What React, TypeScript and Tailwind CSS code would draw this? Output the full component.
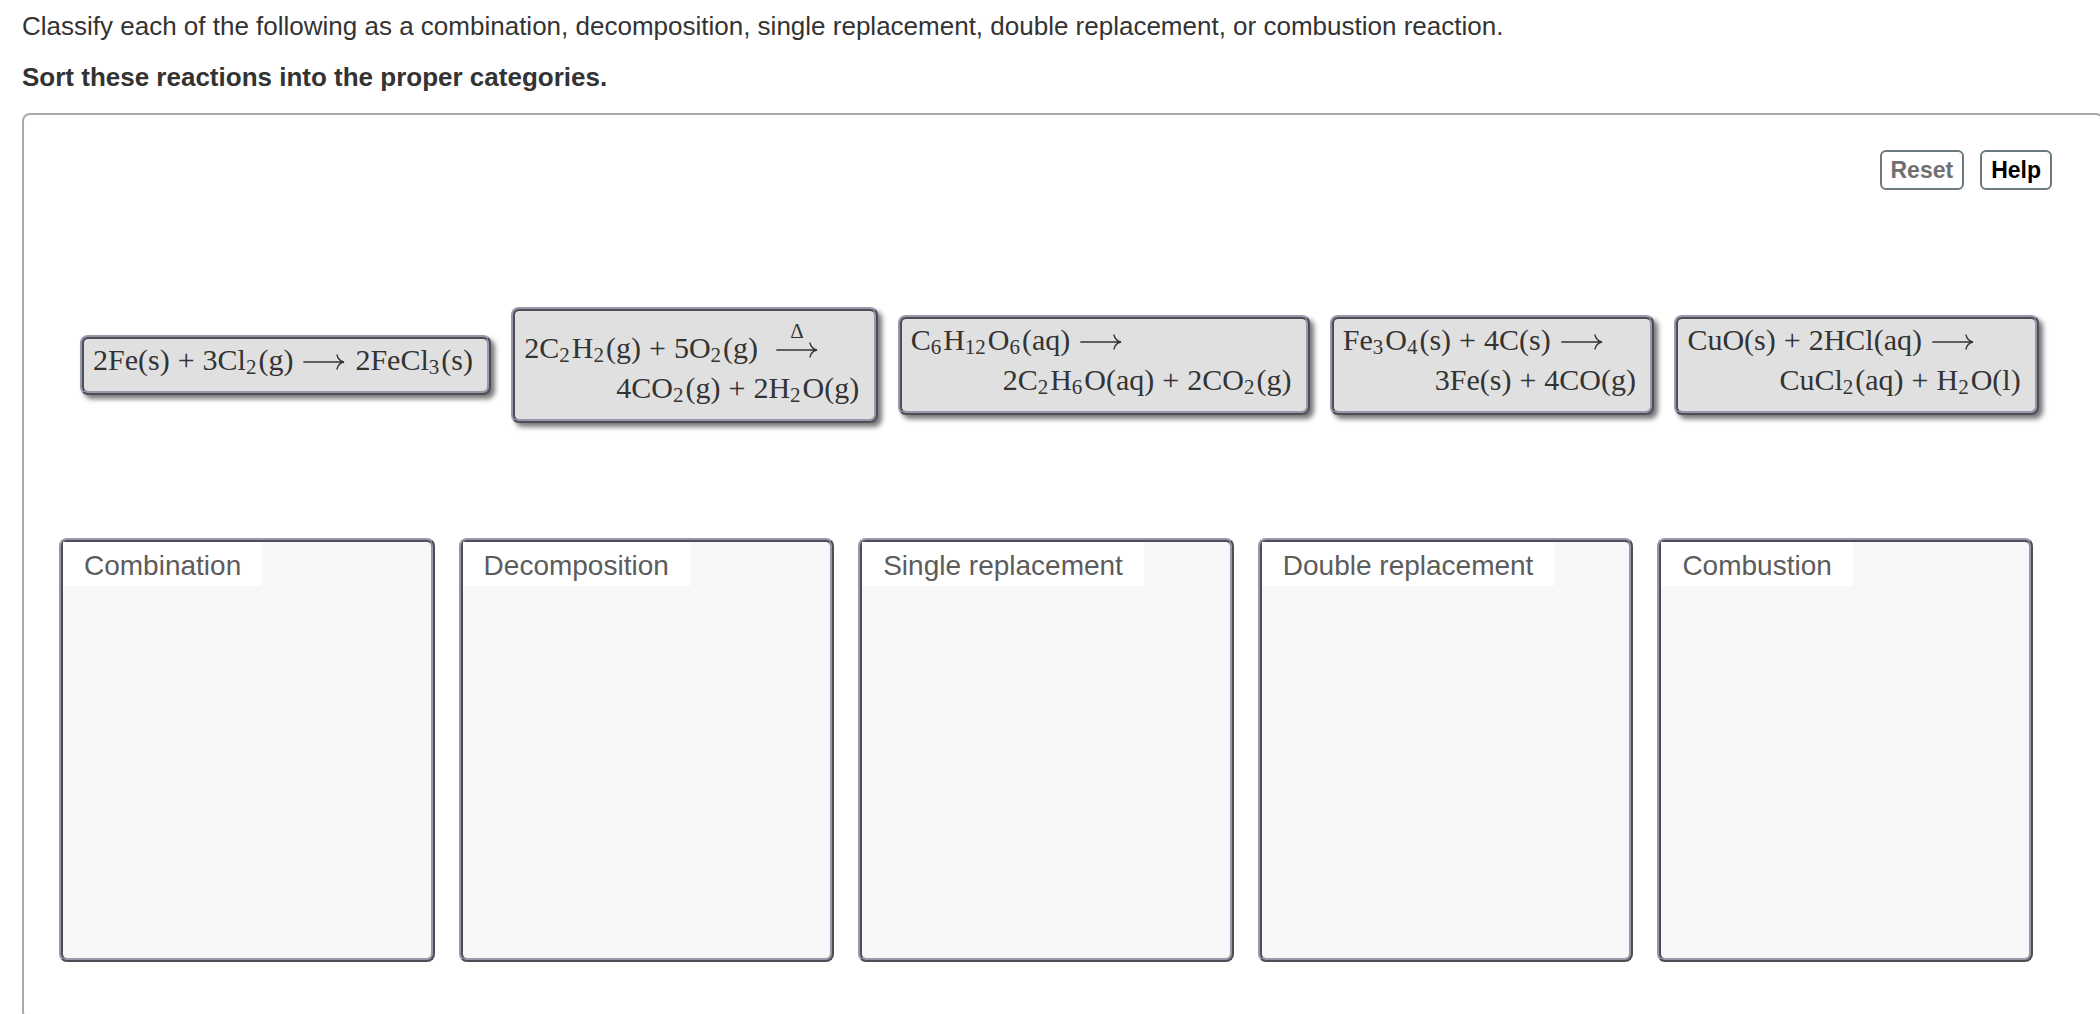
import type { ReactNode } from "react";

function Sub({ children }: { children: ReactNode }) {
  return <sub className="bottom-auto top-1 mr-0.5 text-[21px] leading-none">{children}</sub>;
}

function Plus() {
  return <span className="mx-2">+</span>;
}

function ArrowIcon() {
  return (
    <svg
      viewBox="0 0 42 16"
      className="block h-4 w-[42px]"
      fill="none"
      stroke="currentColor"
      strokeWidth="1.3"
      strokeLinecap="round"
      role="img"
      aria-label="yields"
    >
      <path d="M0.8 8H40.5M34 1C34.8 4.6 37.2 7.2 41 8C37.2 8.8 34.8 11.4 34 15" />
    </svg>
  );
}

function Yields() {
  return (
    <span className="mx-2.5 inline-block">
      <ArrowIcon />
    </span>
  );
}

function YieldsHeated() {
  return (
    <span className="relative ml-[18px] mr-2 inline-block">
      <span className="absolute inset-x-0 bottom-4 text-center text-[21px] leading-none">Δ</span>
      <ArrowIcon />
    </span>
  );
}

const reactions: { id: string; heated?: boolean; first: ReactNode; second?: ReactNode }[] = [
  {
    id: "iron-chlorine",
    first: (
      <>
        2Fe(s)<Plus />3Cl<Sub>2</Sub>(g)<Yields />2FeCl<Sub>3</Sub>(s)
      </>
    ),
  },
  {
    id: "acetylene-oxygen",
    heated: true,
    first: (
      <>
        2C<Sub>2</Sub>H<Sub>2</Sub>(g)<Plus />5O<Sub>2</Sub>(g)<YieldsHeated />
      </>
    ),
    second: (
      <>
        4CO<Sub>2</Sub>(g)<Plus />2H<Sub>2</Sub>O(g)
      </>
    ),
  },
  {
    id: "glucose",
    first: (
      <>
        C<Sub>6</Sub>H<Sub>12</Sub>O<Sub>6</Sub>(aq)<Yields />
      </>
    ),
    second: (
      <>
        2C<Sub>2</Sub>H<Sub>6</Sub>O(aq)<Plus />2CO<Sub>2</Sub>(g)
      </>
    ),
  },
  {
    id: "magnetite-carbon",
    first: (
      <>
        Fe<Sub>3</Sub>O<Sub>4</Sub>(s)<Plus />4C(s)<Yields />
      </>
    ),
    second: (
      <>
        3Fe(s)<Plus />4CO(g)
      </>
    ),
  },
  {
    id: "copper-oxide",
    first: (
      <>
        CuO(s)<Plus />2HCl(aq)<Yields />
      </>
    ),
    second: (
      <>
        CuCl<Sub>2</Sub>(aq)<Plus />H<Sub>2</Sub>O(l)
      </>
    ),
  },
];

const categories = ["Combination", "Decomposition", "Single replacement", "Double replacement", "Combustion"];

export default function App() {
  return (
    <main className="overflow-hidden bg-white pl-[22px] pt-2 font-['Liberation_Sans',Arial,sans-serif] text-[26px] leading-9 text-[#333]">
      <p>
        Classify each of the following as a combination, decomposition, single replacement, double replacement, or
        combustion reaction.
      </p>
      <p className="mt-[15px] font-bold">Sort these reactions into the proper categories.</p>

      <section className="-mr-1 mt-[18px] rounded-lg border-2 border-[#a9a9a9] pb-14 pl-[35px] pr-[69px] pt-[35px]">
        <div className="-mr-[19px] flex justify-end gap-4 text-[23px] font-bold leading-9">
          <button type="button" className="rounded-md border-2 border-[#6c7a80] px-[9px] text-[#707070]">
            Reset
          </button>
          <button type="button" className="rounded-md border-2 border-[#6c7a80] px-[9px] text-black">
            Help
          </button>
        </div>

        <ul className="-mr-[6px] ml-[21px] mt-[117px] flex items-center gap-5 font-['Liberation_Serif','Times_New_Roman',serif] text-[30px] leading-10">
          {reactions.map((r) => (
            <li
              key={r.id}
              className={`grow cursor-grab whitespace-nowrap rounded-lg border-4 border-[#9998aa] bg-[#e0e0e0] pb-[11px] pl-[9px] pr-3 shadow-[4px_4px_5px_#00000088] [border-style:ridge] ${
                r.heated ? "pt-[17px]" : "pt-px"
              }`}
            >
              <div className="h-10">{r.first}</div>
              {r.second && <div className="h-10 pl-[92px]">{r.second}</div>}
            </li>
          ))}
        </ul>

        <div className="mt-[115px] grid grid-cols-5 gap-6">
          {categories.map((name) => (
            <div
              key={name}
              className="h-[424px] rounded-lg border-4 border-[#9998aa] bg-[#f7f7f7] [border-style:ridge]"
            >
              <h2 className="inline-block bg-white px-[21px] pt-1 text-[28px] leading-10 text-[#5c5c5c]">{name}</h2>
            </div>
          ))}
        </div>
      </section>
    </main>
  );
}
